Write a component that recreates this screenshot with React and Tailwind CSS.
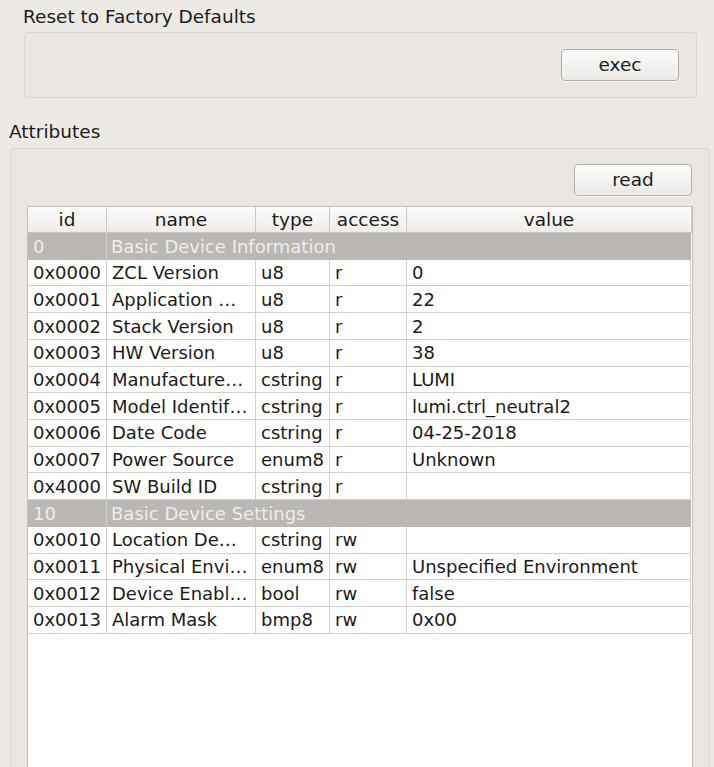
const rows = [
  { group: true, id: '0', name: 'Basic Device Information' },
  { id: '0x0000', name: 'ZCL Version', type: 'u8', access: 'r', value: '0' },
  { id: '0x0001', name: 'Application …', type: 'u8', access: 'r', value: '22' },
  { id: '0x0002', name: 'Stack Version', type: 'u8', access: 'r', value: '2' },
  { id: '0x0003', name: 'HW Version', type: 'u8', access: 'r', value: '38' },
  { id: '0x0004', name: 'Manufacture…', type: 'cstring', access: 'r', value: 'LUMI' },
  { id: '0x0005', name: 'Model Identif…', type: 'cstring', access: 'r', value: 'lumi.ctrl_neutral2' },
  { id: '0x0006', name: 'Date Code', type: 'cstring', access: 'r', value: '04-25-2018' },
  { id: '0x0007', name: 'Power Source', type: 'enum8', access: 'r', value: 'Unknown' },
  { id: '0x4000', name: 'SW Build ID', type: 'cstring', access: 'r', value: '' },
  { group: true, id: '10', name: 'Basic Device Settings' },
  { id: '0x0010', name: 'Location De…', type: 'cstring', access: 'rw', value: '' },
  { id: '0x0011', name: 'Physical Envi…', type: 'enum8', access: 'rw', value: 'Unspecified Environment' },
  { id: '0x0012', name: 'Device Enabl…', type: 'bool', access: 'rw', value: 'false' },
  { id: '0x0013', name: 'Alarm Mask', type: 'bmp8', access: 'rw', value: '0x00' },
];

function Button({ children }) {
  return (
    <button className="w-[118px] h-[32px] rounded-[4px] border border-[#b3afab] bg-gradient-to-b from-[#fcfcfb] to-[#ebe9e6] text-[18.5px] text-[#1e1e1e] shadow-[0_1px_0_rgba(255,255,255,0.6)]">
      {children}
    </button>
  );
}

function Cell({ w, children, className = '' }) {
  return (
    <div className={`${w} shrink-0 h-full border-r border-[#d3d1ce] pl-[5px] flex items-center whitespace-nowrap overflow-hidden ${className}`}>
      {children}
    </div>
  );
}

export default function App() {
  return (
    <div
      className="w-[714px] h-[767px] overflow-hidden bg-[#edeae6] text-[#1b1b1b]"
      style={{ fontFamily: '"DejaVu Sans", Verdana, sans-serif' }}
    >
      {/* Reset to Factory Defaults */}
      <div className="h-[32px] leading-[32px] pt-[1px] pl-[23px] text-[18.5px]">Reset to Factory Defaults</div>
      <div className="ml-[24px] mr-[17px] h-[66px] rounded-[3px] border border-[#d9d5d1] bg-[#e9e6e2] flex justify-end pt-[16px] pr-[17px]">
        <Button>exec</Button>
      </div>

      {/* Attributes */}
      <div className="h-[50px] pt-[23px] pl-[9px] leading-[22px] text-[18.5px]">Attributes</div>
      <div className="ml-[10px] mr-[4px] h-[640px] rounded-[3px] border border-[#d9d5d1] bg-[#e9e6e2] px-[16px] pt-[15px]">
        <div className="flex justify-end pr-[1px]">
          <Button>read</Button>
        </div>
        <div className="mt-[10px] h-[600px] border border-[#c2bfbb] bg-white text-[18px]">
          {/* header */}
          <div className="flex h-[26px] border-b border-[#c9c6c2] bg-gradient-to-b from-[#fbfbfa] to-[#efedea] text-[18.5px]">
            {[
              ['w-[79px]', 'id'],
              ['w-[149px]', 'name'],
              ['w-[74px]', 'type'],
              ['w-[77px]', 'access'],
              ['flex-1', 'value'],
            ].map(([w, label]) => (
              <div key={label} className={`${w} shrink-0 h-full border-r border-[#cdcac6] flex items-center justify-center`}>
                {label}
              </div>
            ))}
          </div>

          {rows.map((r) =>
            r.group ? (
              <div key={r.id} className="flex h-[26.73px] bg-[#bbb7b4] text-[#efedea] mr-[1px]">
                <Cell w="w-[79px]" className="border-[#c6c2bf]">{r.id}</Cell>
                <div className="flex-1 pl-[4px] flex items-center whitespace-nowrap">{r.name}</div>
              </div>
            ) : (
              <div key={r.id} className="flex h-[26.73px] border-b border-[#d3d1ce] mr-[1px]">
                <Cell w="w-[79px]">{r.id}</Cell>
                <Cell w="w-[149px]" className="pl-[4px]">{r.name}</Cell>
                <Cell w="w-[74px]" className="pl-[4px]">{r.type}</Cell>
                <Cell w="w-[77px]" className="pl-[4px]">{r.access}</Cell>
                <Cell w="flex-1" className="pl-[4px]">{r.value}</Cell>
              </div>
            )
          )}
        </div>
      </div>
    </div>
  );
}
